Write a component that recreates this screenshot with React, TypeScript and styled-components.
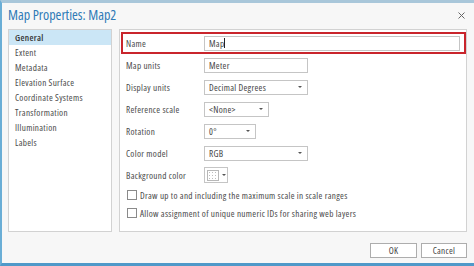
import React from "react";
import styled, { createGlobalStyle } from "styled-components";

const Global = createGlobalStyle`
  html, body { margin: 0; padding: 0; background: #f7f7f7; }
  * { box-sizing: border-box; }
`;

const Window = styled.div`
  width: 474px;
  height: 266px;
  background: #f7f7f7;
  border-top: 3px solid #a9c7da;
  border-left: 2px solid #6aaed6;
  border-bottom: 3px solid #4f99c9;
  display: flex;
  flex-direction: column;
  font-family: "Open Sans", "Noto Sans", sans-serif;
  font-stretch: 75%;
  letter-spacing: 0.3px;
  color: #444;
  overflow: hidden;
`;

const TitleBar = styled.div`
  height: 26px;
  display: flex;
  align-items: center;
  justify-content: space-between;
  padding: 0 8px 3px 6px;
`;

const Title = styled.div`
  font-size: 14px;
  letter-spacing: 0;
  color: #2f7ab6;
`;

const Close = styled.div`
  width: 10px;
  height: 10px;
  display: flex;
  align-items: center;
  justify-content: center;
  margin-top: 1px;
`;

const Body = styled.div`
  display: flex;
  gap: 7px;
  padding: 0 7px 0 6px;
  height: 203px;
`;

const NavPanel = styled.div`
  width: 104px;
  background: #fff;
  border: 1px solid #d2d2d2;
  display: flex;
  flex-direction: column;
`;

const NavItem = styled.div<{ $active?: boolean }>`
  height: 15px;
  line-height: 15px;
  padding-left: 6px;
  font-size: 9.2px;
  color: ${(p) => (p.$active ? "#333" : "#4a4a4a")};
  font-weight: ${(p) => (p.$active ? 600 : 400)};
  background: ${(p) => (p.$active ? "#cbe6f6" : "transparent")};
  white-space: nowrap;
`;

const ContentPanel = styled.div`
  flex: 1;
  background: #fff;
  border: 1px solid #d2d2d2;
  display: flex;
  flex-direction: column;
  padding: 2px 0 0 1px;
`;

const Row = styled.div`
  height: 22px;
  display: flex;
  align-items: center;
  padding-left: 5px;
  font-size: 9.2px;
  color: #4a4a4a;
`;

const NameRow = styled(Row)`
  border: 2px solid #c9252c;
  padding-left: 3px;
  padding-right: 4px;
`;

const Label = styled.div`
  width: 78px;
  flex: none;
  white-space: nowrap;
`;

const Field = styled.div<{ $w?: number }>`
  height: 15px;
  width: ${(p) => (p.$w ? `${p.$w}px` : "auto")};
  flex: ${(p) => (p.$w ? "none" : "1")};
  border: 1px solid #c5c5c5;
  background: #fff;
  display: flex;
  align-items: center;
  padding: 0 4px;
  font-size: 9.2px;
  color: #444;
  white-space: nowrap;
`;

const Caret = styled.span`
  display: inline-block;
  width: 1px;
  height: 10px;
  background: #222;
`;

const FieldText = styled.span`
  flex: 1;
`;

const Arrow = styled.span`
  width: 0;
  height: 0;
  border-left: 2px solid transparent;
  border-right: 2px solid transparent;
  border-top: 2.5px solid #555;
  margin-right: 1px;
`;

const Swatch = styled.div`
  width: 24px;
  height: 16px;
  border: 1px solid #c5c5c5;
  background: #fff;
  display: flex;
  align-items: center;
  gap: 3px;
  padding-left: 2px;
`;

const Checker = styled.div`
  width: 12px;
  height: 11px;
  border: 1px solid #b8b8b8;
  background-color: #fff;
  background-image: radial-gradient(#bdbdbd 35%, transparent 40%);
  background-size: 3px 3px;
`;

const CheckRow = styled.div`
  height: 18px;
  display: flex;
  align-items: center;
  gap: 3px;
  padding-left: 6px;
  font-size: 9.2px;
  color: #4a4a4a;
  white-space: nowrap;
`;

const Box = styled.span`
  width: 10px;
  height: 10px;
  border: 1px solid #8a8a8a;
  background: #fff;
  flex: none;
`;

const Footer = styled.div`
  flex: 1;
  display: flex;
  justify-content: flex-end;
  align-items: flex-start;
  gap: 4px;
  padding: 11px 7px 0 0;
`;

const Button = styled.button<{ $w: number }>`
  width: ${(p) => p.$w}px;
  height: 15px;
  border: 1px solid #adadad;
  background: #fff;
  font-family: "Open Sans", "Noto Sans", sans-serif;
  font-stretch: 75%;
  letter-spacing: 0.3px;
  font-size: 9.2px;
  color: #444;
  padding: 0;
  line-height: 13px;
`;

const navItems = [
  "General",
  "Extent",
  "Metadata",
  "Elevation Surface",
  "Coordinate Systems",
  "Transformation",
  "Illumination",
  "Labels",
];

export default function App() {
  return (
    <>
      <Global />
      <Window>
        <TitleBar>
          <Title>Map Properties: Map2</Title>
          <Close>
            <svg width="7" height="7" viewBox="0 0 7 7">
              <path d="M0.5 0.5 L6.5 6.5 M6.5 0.5 L0.5 6.5" stroke="#666" strokeWidth="1" />
            </svg>
          </Close>
        </TitleBar>
        <Body>
          <NavPanel>
            {navItems.map((n, i) => (
              <NavItem key={n} $active={i === 0}>
                {n}
              </NavItem>
            ))}
          </NavPanel>
          <ContentPanel>
            <NameRow>
              <Label>Name</Label>
              <Field>
                Map
                <Caret />
              </Field>
            </NameRow>
            <Row>
              <Label>Map units</Label>
              <Field $w={104}>Meter</Field>
            </Row>
            <Row>
              <Label>Display units</Label>
              <Field $w={104}>
                <FieldText>Decimal Degrees</FieldText>
                <Arrow />
              </Field>
            </Row>
            <Row>
              <Label>Reference scale</Label>
              <Field $w={65}>
                <FieldText>&lt;None&gt;</FieldText>
                <Arrow />
              </Field>
            </Row>
            <Row>
              <Label>Rotation</Label>
              <Field $w={52}>
                <FieldText>0°</FieldText>
                <Arrow />
              </Field>
            </Row>
            <Row>
              <Label>Color model</Label>
              <Field $w={104}>
                <FieldText>RGB</FieldText>
                <Arrow />
              </Field>
            </Row>
            <Row>
              <Label>Background color</Label>
              <Swatch>
                <Checker />
                <Arrow />
              </Swatch>
            </Row>
            <CheckRow>
              <Box />
              Draw up to and including the maximum scale in scale ranges
            </CheckRow>
            <CheckRow>
              <Box />
              Allow assignment of unique numeric IDs for sharing web layers
            </CheckRow>
          </ContentPanel>
        </Body>
        <Footer>
          <Button $w={47}>OK</Button>
          <Button $w={46}>Cancel</Button>
        </Footer>
      </Window>
    </>
  );
}
